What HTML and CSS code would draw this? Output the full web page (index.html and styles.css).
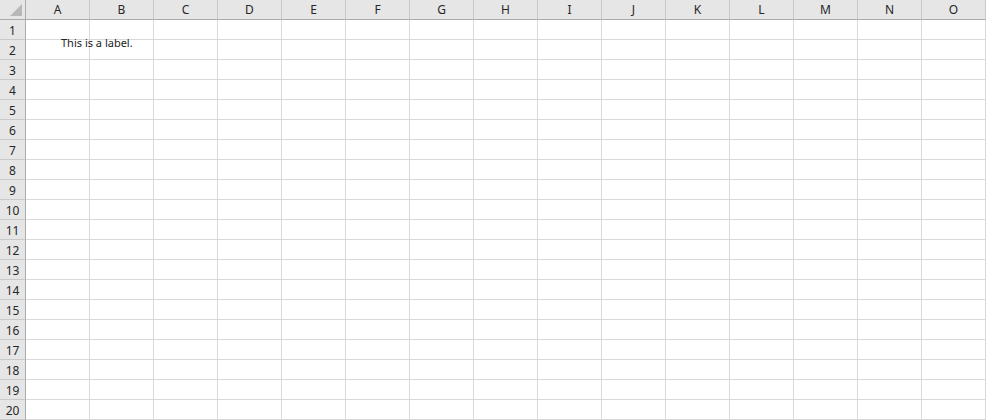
FILE: index.html
```html
<!DOCTYPE html>
<html>
<head>
<meta charset="utf-8">
<link rel="stylesheet" href="styles.css">
</head>
<body>
<div class="sheet">
  <div class="grid" id="grid">
    <div class="corner"><span class="tri"></span></div>
    <div class="ch">A</div><div class="ch">B</div><div class="ch">C</div><div class="ch">D</div><div class="ch">E</div>
    <div class="ch">F</div><div class="ch">G</div><div class="ch">H</div><div class="ch">I</div><div class="ch">J</div>
    <div class="ch">K</div><div class="ch">L</div><div class="ch">M</div><div class="ch">N</div><div class="ch">O</div>
  </div>
  <div class="label">This is a label.</div>
</div>
<script>
  var g = document.getElementById('grid');
  for (var r = 1; r <= 20; r++) {
    var h = document.createElement('div');
    h.className = 'rh';
    h.textContent = r;
    g.appendChild(h);
    for (var c = 0; c < 15; c++) {
      var d = document.createElement('div');
      d.className = 'cell';
      g.appendChild(d);
    }
  }
</script>
</body>
</html>
```

FILE: styles.css
```css
html, body {
  margin: 0;
  padding: 0;
  background: #ffffff;
  overflow: hidden;
}
.sheet {
  position: relative;
  width: 986px;
  height: 420px;
  font-family: "Noto Sans", "Open Sans", sans-serif;
}
.grid {
  display: grid;
  grid-template-columns: 26px repeat(15, 64px);
  grid-auto-rows: 20px;
}
.grid > div {
  box-sizing: border-box;
}
.corner {
  background: #e6e6e6;
  border-right: 1px solid #ababab;
  border-bottom: 1px solid #ababab;
  position: relative;
}
.tri {
  position: absolute;
  right: 3px;
  bottom: 3px;
  width: 0;
  height: 0;
  border-left: 12px solid transparent;
  border-bottom: 12px solid #b8b8b8;
}
.ch {
  background: #e6e6e6;
  border-right: 1px solid #c9c9c9;
  border-bottom: 1px solid #ababab;
  font-size: 12px;
  line-height: 19px;
  text-align: center;
  color: #262626;
}
.rh {
  background: #e6e6e6;
  border-right: 1px solid #ababab;
  border-bottom: 1px solid #c9c9c9;
  font-size: 12px;
  line-height: 21px;
  text-align: center;
  color: #262626;
}
.cell {
  border-right: 1px solid #d9d9d9;
  border-bottom: 1px solid #d9d9d9;
}
.label {
  position: absolute;
  left: 61px;
  top: 35px;
  font-size: 11px;
  line-height: 15px;
  color: #222;
}
```
